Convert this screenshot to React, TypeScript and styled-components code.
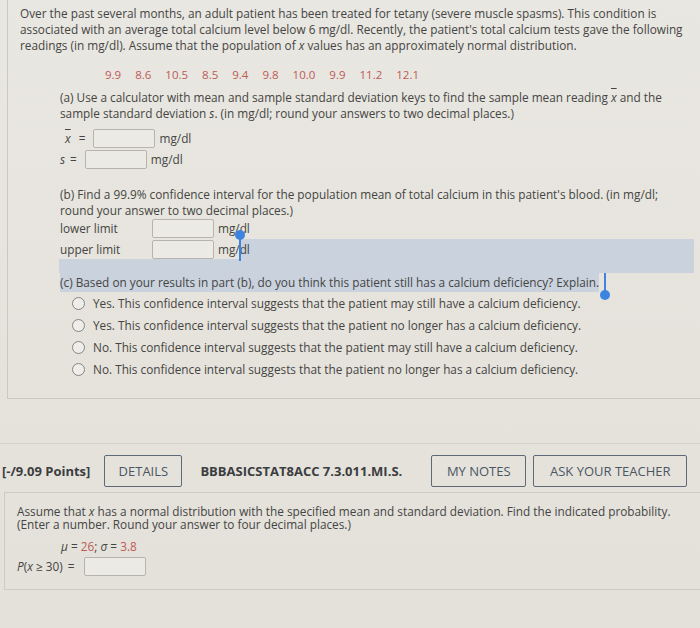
import React from "react";
import styled, { createGlobalStyle } from "styled-components";

const GlobalStyle = createGlobalStyle`
  html, body {
    margin: 0;
    padding: 0;
  }
  body {
    background: #e6e4dd;
    color: #454543;
    font-family: "Open Sans", "Liberation Sans", sans-serif;
    font-size: 11.8px;
  }
`;

/**
 * >>> Style
 */
const Page = styled.div`
  width: 700px;
  height: 628px;
  overflow: hidden;
  background: linear-gradient(180deg, #e9e7e1 0%, #e5e3dc 55%, #e3e1da 100%);
`;

const Panel = styled.section`
  box-sizing: border-box;
  height: 399px;
  margin-left: 7px;
  padding: 5px 0 0 12px;
  border-left: 1px solid #cbc9c2;
  border-bottom: 1px solid #cbc9c2;
`;

const Intro = styled.p`
  width: 676px;
  margin: 0;
  line-height: 16px;
`;

const DataRow = styled.div`
  display: flex;
  gap: 14px;
  margin: 14px 0 0 85px;
  font-size: 11.5px;
  line-height: 16px;
  color: #be5a56;
`;

const Part = styled.div`
  margin: 0 6px 0 40px;
`;

const PartText = styled.p<{ $top: number }>`
  width: 615px;
  margin: ${(p) => p.$top}px 0 0;
  line-height: 16px;
`;

const AnswerRow = styled.div<{ $top: number; $indent: number }>`
  display: flex;
  align-items: center;
  height: 20px;
  margin-top: ${(p) => p.$top}px;
  padding-left: ${(p) => p.$indent}px;
`;

const Symbol = styled.span<{ $right?: number }>`
  display: flex;
  gap: 5px;
  margin-right: ${(p) => p.$right ?? 6}px;
  white-space: nowrap;
`;

const Bar = styled.span`
  font-style: italic;
  text-decoration: overline;
`;

const Italic = styled.span`
  font-style: italic;
`;

const Input = styled.span<{ $width?: number }>`
  box-sizing: border-box;
  width: ${(p) => p.$width ?? 62}px;
  height: 19px;
  border: 1px solid #b6b4ad;
  border-radius: 2px;
  background: #ebeae5;
`;

const Unit = styled.span`
  display: flex;
  align-items: center;
  height: 100%;
  margin-left: 4px;
`;

const LimitLabel = styled.span`
  width: 92px;
`;

const Selected = styled.span`
  background: #c9d2dd;
`;

const StartMark = styled(Selected)`
  position: relative;
  display: inline-flex;
  align-items: center;
  height: 100%;

  &::before {
    content: "";
    position: absolute;
    left: -1px;
    top: -4px;
    width: 2px;
    height: 26px;
    background: #3d84e0;
  }
  &::after {
    content: "";
    position: absolute;
    left: -5px;
    top: -9px;
    width: 10px;
    height: 10px;
    border-radius: 50%;
    background: #3d84e0;
  }
`;

const SelectionFill = styled.span`
  flex: 1;
  align-self: stretch;
  background: #c9d2dd;
`;

const SelectionGap = styled.div`
  height: 14px;
  margin-left: -1px;
  background: #c9d2dd;
`;

const QuestionLine = styled.div`
  display: flex;
  align-items: stretch;
  height: 19px;
  line-height: 19px;
`;

const EndHandle = styled.span`
  position: relative;
  width: 2px;
  margin-left: 5px;
  background: #3d84e0;

  &::after {
    content: "";
    position: absolute;
    left: -4px;
    top: 17px;
    width: 10px;
    height: 10px;
    border-radius: 50%;
    background: #3d84e0;
  }
`;

const Choice = styled.label`
  display: flex;
  align-items: center;
  height: 22px;
  padding-left: 12px;
`;

const Radio = styled.span`
  box-sizing: border-box;
  width: 13px;
  height: 13px;
  margin-right: 8px;
  border: 1.4px solid #858582;
  border-radius: 50%;
  background: #eeede9;
`;

const Divider = styled.div`
  margin-top: 44px;
  border-top: 1px solid #d3d1ca;
`;

const Header = styled.div`
  display: flex;
  align-items: center;
  height: 37px;
  margin-top: 8px;
  padding-left: 2px;
`;

const HeaderText = styled.span<{ $right: number }>`
  margin-right: ${(p) => p.$right}px;
  font-size: 13px;
  font-weight: 700;
  color: #3b3d40;
  white-space: nowrap;
`;

const Button = styled.span<{ $width: number; $right: number }>`
  box-sizing: border-box;
  display: flex;
  align-items: center;
  justify-content: center;
  width: ${(p) => p.$width}px;
  height: 32px;
  margin-right: ${(p) => p.$right}px;
  border: 1.5px solid #5d6978;
  border-radius: 2px;
  font-size: 13px;
  color: #4a5664;
`;

const ProblemBox = styled.section`
  box-sizing: border-box;
  height: 98px;
  margin: 3px 0 0 4px;
  padding: 12px 0 0 12px;
  border: 1px solid #cdcbc4;
  border-right: none;
`;

const ProblemText = styled.p`
  width: 668px;
  margin: 0;
  line-height: 13px;
`;

const Params = styled.div`
  margin: 7px 0 0 44px;
  line-height: 16px;
`;

const Red = styled.span`
  color: #be5a56;
`;
// <<< Style

const readings = ["9.9", "8.6", "10.5", "8.5", "9.4", "9.8", "10.0", "9.9", "11.2", "12.1"];

const choices = [
  "Yes. This confidence interval suggests that the patient may still have a calcium deficiency.",
  "Yes. This confidence interval suggests that the patient no longer has a calcium deficiency.",
  "No. This confidence interval suggests that the patient may still have a calcium deficiency.",
  "No. This confidence interval suggests that the patient no longer has a calcium deficiency.",
];

const App = () => {
  return (
    <Page>
      <GlobalStyle />
      <Panel>
        <Intro>
          Over the past several months, an adult patient has been treated for tetany (severe muscle
          spasms). This condition is associated with an average total calcium level below 6 mg/dl.
          Recently, the patient's total calcium tests gave the following readings (in mg/dl). Assume
          that the population of <Italic>x</Italic> values has an approximately normal distribution.
        </Intro>
        <DataRow>
          {readings.map((r, i) => (
            <span key={i}>{r}</span>
          ))}
        </DataRow>
        <Part>
          <PartText $top={6}>
            (a) Use a calculator with mean and sample standard deviation keys to find the sample mean
            reading <Bar>x</Bar> and the sample standard deviation <Italic>s</Italic>. (in mg/dl; round
            your answers to two decimal places.)
          </PartText>
          <AnswerRow $top={7} $indent={5}>
            <Symbol $right={8}>
              <Bar>x</Bar>
              <span>&nbsp;=</span>
            </Symbol>
            <Input />
            <Unit>mg/dl</Unit>
          </AnswerRow>
          <AnswerRow $top={1} $indent={0}>
            <Symbol $right={8}>
              <Italic>s</Italic>
              <span>=</span>
            </Symbol>
            <Input />
            <Unit>mg/dl</Unit>
          </AnswerRow>

          <PartText $top={17}>
            (b) Find a 99.9% confidence interval for the population mean of total calcium in this
            patient's blood. (in mg/dl; round your answer to two decimal places.)
          </PartText>
          <AnswerRow $top={0} $indent={0}>
            <LimitLabel>lower limit</LimitLabel>
            <Input />
            <Unit>mg/dl</Unit>
          </AnswerRow>
          <AnswerRow $top={1} $indent={0}>
            <LimitLabel>upper limit</LimitLabel>
            <Input />
            <Unit>
              mg/<StartMark>dl</StartMark>
            </Unit>
            <SelectionFill />
          </AnswerRow>
          <SelectionGap />
          <QuestionLine>
            <Selected>
              (c) Based on your results in part (b), do you think this patient still has a calcium
              deficiency? Explain.
            </Selected>
            <EndHandle />
          </QuestionLine>
          {choices.map((c, i) => (
            <Choice key={i}>
              <Radio />
              {c}
            </Choice>
          ))}
        </Part>
      </Panel>

      <Divider />
      <Header>
        <HeaderText $right={14}>[-/9.09 Points]</HeaderText>
        <Button $width={78} $right={18}>
          DETAILS
        </Button>
        <HeaderText $right={29}>BBBASICSTAT8ACC 7.3.011.MI.S.</HeaderText>
        <Button $width={95} $right={7}>
          MY NOTES
        </Button>
        <Button $width={154} $right={0}>
          ASK YOUR TEACHER
        </Button>
      </Header>

      <ProblemBox>
        <ProblemText>
          Assume that <Italic>x</Italic> has a normal distribution with the specified mean and standard
          deviation. Find the indicated probability. (Enter a number. Round your answer to four decimal
          places.)
        </ProblemText>
        <Params>
          <Italic>μ</Italic> = <Red>26</Red>; <Italic>σ</Italic> = <Red>3.8</Red>
        </Params>
        <AnswerRow $top={2} $indent={0}>
          <Symbol $right={10}>
            <span>
              <Italic>P</Italic>(<Italic>x</Italic> ≥ 30)
            </span>
            <span>=</span>
          </Symbol>
          <Input />
        </AnswerRow>
      </ProblemBox>
    </Page>
  );
};

export default App;
